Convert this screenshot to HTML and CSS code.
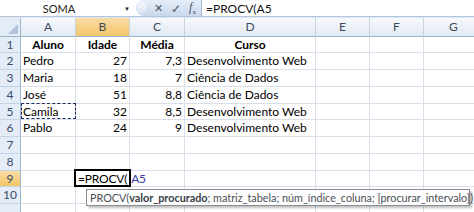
FILE: index.html
```html
<!DOCTYPE html>
<html lang="pt-br">
<head>
    <meta charset="UTF-8">
    <title>PROCV</title>
    <link rel="stylesheet" href="styles.css">
</head>
<body>
    <div class="formula_bar">
        <div class="name_box">SOMA</div>
        <div class="name_arrow">&#9660;</div>
        <div class="fx_buttons">
            <span class="knob"></span>
            <span class="fx_btn">&#10005;</span>
            <span class="fx_btn check">&#10003;</span>
            <span class="fx_btn fx"><i>f</i><sub>x</sub></span>
        </div>
        <div class="formula_input">=PROCV(A5</div>
    </div>
    <div class="bar_gap"></div>

    <div class="sheet">
        <div class="corner">
            <svg width="10" height="10" viewBox="0 0 10 10"><polygon points="10,0 10,10 0,10" fill="#b4c4d8"/></svg>
        </div>
        <div class="col_head">A</div>
        <div class="col_head active">B</div>
        <div class="col_head">C</div>
        <div class="col_head">D</div>
        <div class="col_head">E</div>
        <div class="col_head">F</div>
        <div class="col_head last">G</div>

        <div class="row_head">1</div>
        <div class="cell bold center">Aluno</div>
        <div class="cell bold center">Idade</div>
        <div class="cell bold center">Média</div>
        <div class="cell bold center">Curso</div>
        <div class="cell"></div><div class="cell"></div><div class="cell"></div>

        <div class="row_head">2</div>
        <div class="cell">Pedro</div>
        <div class="cell num">27</div>
        <div class="cell num">7,3</div>
        <div class="cell">Desenvolvimento Web</div>
        <div class="cell"></div><div class="cell"></div><div class="cell"></div>

        <div class="row_head">3</div>
        <div class="cell">Maria</div>
        <div class="cell num">18</div>
        <div class="cell num">7</div>
        <div class="cell">Ciência de Dados</div>
        <div class="cell"></div><div class="cell"></div><div class="cell"></div>

        <div class="row_head">4</div>
        <div class="cell">José</div>
        <div class="cell num">51</div>
        <div class="cell num">8,8</div>
        <div class="cell">Ciência de Dados</div>
        <div class="cell"></div><div class="cell"></div><div class="cell"></div>

        <div class="row_head">5</div>
        <div class="cell copied">Camila</div>
        <div class="cell num">32</div>
        <div class="cell num">8,5</div>
        <div class="cell">Desenvolvimento Web</div>
        <div class="cell"></div><div class="cell"></div><div class="cell"></div>

        <div class="row_head">6</div>
        <div class="cell">Pablo</div>
        <div class="cell num">24</div>
        <div class="cell num">9</div>
        <div class="cell">Desenvolvimento Web</div>
        <div class="cell"></div><div class="cell"></div><div class="cell"></div>

        <div class="row_head">7</div>
        <div class="cell"></div><div class="cell"></div><div class="cell"></div><div class="cell"></div>
        <div class="cell"></div><div class="cell"></div><div class="cell"></div>

        <div class="row_head">8</div>
        <div class="cell"></div><div class="cell"></div><div class="cell"></div><div class="cell"></div>
        <div class="cell"></div><div class="cell"></div><div class="cell"></div>

        <div class="row_head active">9</div>
        <div class="cell"></div>
        <div class="cell editing"><span class="edit_text">=PROCV(<span class="ref">A5</span></span></div>
        <div class="cell"></div><div class="cell"></div>
        <div class="cell"></div><div class="cell"></div><div class="cell"></div>

        <div class="row_head">10</div>
        <div class="cell"></div><div class="cell"></div><div class="cell"></div><div class="cell"></div>
        <div class="cell"></div><div class="cell"></div><div class="cell"></div>

        <div class="row_head"></div>
        <div class="cell"></div><div class="cell"></div><div class="cell"></div><div class="cell"></div>
        <div class="cell"></div><div class="cell"></div><div class="cell"></div>

        <div class="tip">PROCV(<b>valor_procurado</b>; matriz_tabela; núm_índice_coluna; [procurar_intervalo])</div>
    </div>
</body>
</html>
```

FILE: styles.css
```css
html, body{
    height:212px;
    overflow:hidden;
}

body{
    margin:0;
    background:#fff;
    font-family:Lato, "Liberation Sans", sans-serif;
}

/* barra de fórmulas */
.formula_bar{
    height:16px;
    display:flex;
    align-items:center;
    border-bottom:1px solid #b5c6da;
    background:#fff;
}

.name_box{
    width:118px;
    text-align:center;
    font-size:11px;
    color:#222;
}

.name_arrow{
    width:18px;
    font-size:6px;
    color:#222;
    text-align:center;
}

.fx_buttons{
    width:66px;
    height:16px;
    display:flex;
    align-items:center;
    background:linear-gradient(#e6eef9,#c9d8ec);
    border-radius:9px 0 0 9px;
    border-right:1px solid #a7bad2;
    box-sizing:border-box;
}

.knob{
    width:8px;
    height:12px;
    margin:0 4px 0 2px;
    border-radius:6px;
    background:linear-gradient(#f6f9fd,#d7e2f0);
}

.fx_btn{
    width:17px;
    text-align:center;
    font-size:11px;
    color:#4a5563;
}

.check{
    font-size:12px;
}

.fx{
    font-family:"Liberation Serif", serif;
    font-size:12px;
}

.fx sub{
    font-size:7px;
}

.formula_input{
    flex:1;
    padding-left:4px;
    font-size:12px;
    color:#111;
}

.bar_gap{
    height:1px;
    background:#dde7f3;
}

/* planilha */
.sheet{
    position:relative;
    display:grid;
    grid-template-columns:21px 55px 54px 55px 131px 54px 54px 60px;
    grid-template-rows:18.5px repeat(11, 16.75px);
    font-size:12px;
    color:#000;
}

.corner{
    background:#e4ecf7;
    border-right:1px solid #9eb6ce;
    border-bottom:1px solid #9eb6ce;
    box-sizing:border-box;
    display:flex;
    align-items:flex-end;
    justify-content:flex-end;
    padding:0 2px 2px 0;
}

.col_head{
    background:linear-gradient(#f7f9fc,#e2e9f3);
    border-right:1px solid #c5d3e2;
    border-bottom:1px solid #9eb6ce;
    box-sizing:border-box;
    text-align:center;
    line-height:18px;
    color:#3d4a5a;
}

.col_head.active{
    background:linear-gradient(#f9dca4,#f3c56a);
}

.row_head{
    background:#e4ecf7;
    border-right:1px solid #9eb6ce;
    border-bottom:1px solid #c5d3e2;
    box-sizing:border-box;
    text-align:center;
    line-height:16px;
    color:#3b4d66;
}

.row_head.active{
    background:linear-gradient(#f9dca4,#f3c56a);
}

.cell{
    border-right:1px solid #d9dfe8;
    border-bottom:1px solid #d9dfe8;
    box-sizing:border-box;
    padding:0 2px;
    line-height:16px;
    white-space:nowrap;
}

.bold{
    font-weight:bold;
}

.center{
    text-align:center;
}

.num{
    text-align:right;
}

.copied{
    position:relative;
}

.copied::after{
    content:"";
    position:absolute;
    left:0;
    top:-1px;
    right:-1px;
    bottom:0;
    border:1px dashed #1d2a5c;
}

.editing{
    position:relative;
    overflow:visible;
    z-index:1;
}

.editing::after{
    content:"";
    position:absolute;
    left:-2px;
    top:-2px;
    right:-2px;
    bottom:-1px;
    border:2px solid #000;
}

.edit_text{
    position:relative;
    z-index:1;
    letter-spacing:-0.2px;
}

.ref{
    color:#3b3ba8;
    margin-left:4px;
}

.tip{
    position:absolute;
    left:86px;
    top:171px;
    width:384px;
    height:17px;
    box-sizing:border-box;
    background:#fdfdfd;
    border:1px solid #8a8f96;
    box-shadow:2px 2px 2px rgba(0,0,0,0.25);
    font-family:Lato, sans-serif;
    font-size:10.8px;
    line-height:15px;
    padding-left:3px;
    color:#4a4f57;
    white-space:nowrap;
    z-index:2;
}

.tip b{
    color:#3a3f47;
}
```
